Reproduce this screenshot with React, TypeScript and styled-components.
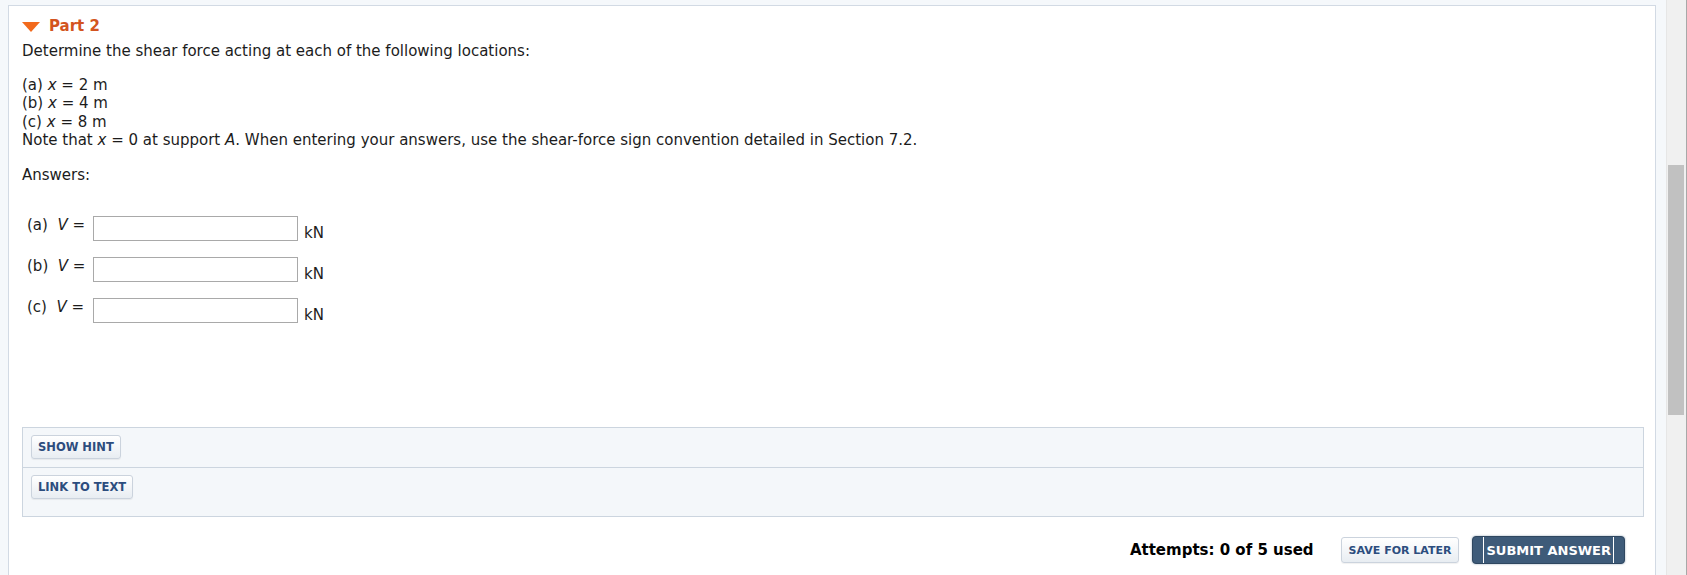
import React from 'react';
import styled, { createGlobalStyle } from 'styled-components';

const GlobalStyle = createGlobalStyle`
  html, body {
    margin: 0;
    padding: 0;
    background: #f5f8fb;
    font-family: 'DejaVu Sans', Verdana, sans-serif;
    font-size: 15px;
    color: #1c1c1c;
  }
`;

/**
 * Page frame: content column plus a fake browser scrollbar
 */
const Page = styled.div`
  display: flex;
  height: 575px;
  overflow: hidden;
`;

const Main = styled.div`
  flex: 1;
  padding: 5px 10px 0 8px;
  display: flex;
`;

const Scrollbar = styled.div`
  width: 21px;
  background: #f0f0f0;
  border-left: 1px solid #e6e6e6;
  border-right: 1px solid #a8a8a8;
  box-sizing: border-box;
  padding: 165px 2px 0 1px;
`;

const Thumb = styled.div`
  height: 250px;
  background: #c1c1c1;
`;

const Panel = styled.section`
  flex: 1;
  background: #fff;
  border: 1px solid #d2dae4;
  border-bottom: none;
  padding: 11px 11px 0 13px;
  display: flex;
  flex-direction: column;
`;

const PartHeader = styled.h2`
  margin: 0;
  display: flex;
  align-items: center;
  gap: 9px;
  font-size: 15px;
  line-height: 18px;
  font-weight: bold;
  color: #d35420;
`;

const Caret = styled.span`
  width: 0;
  height: 0;
  border-left: 9px solid transparent;
  border-right: 9px solid transparent;
  border-top: 10px solid #f26a1d;
  margin-top: 1px;
`;

const Paragraph = styled.p<{ $gap?: number }>`
  margin: ${(p) => p.$gap ?? 0}px 0 0;
  line-height: 18.5px;
`;

const AnswerList = styled.div`
  margin-top: 32px;
  display: flex;
  flex-direction: column;
  gap: 15px;
  padding-left: 5px;
`;

const AnswerRow = styled.div`
  display: flex;
  align-items: flex-start;
  height: 26px;
`;

const AnswerLabel = styled.label`
  width: 66px;
  line-height: 18px;
  white-space: pre;
`;

const AnswerInput = styled.input`
  width: 205px;
  height: 25px;
  box-sizing: border-box;
  border: 1px solid #a9a9a9;
  margin: 0;
  padding: 0 4px;
  font: inherit;
`;

const Unit = styled.span`
  margin: 8px 0 0 6px;
  line-height: 18px;
`;

const Spacer = styled.div`
  flex: 1;
`;

const HintBox = styled.div`
  background: #f4f7fa;
  border: 1px solid #ccd5df;
  display: flex;
  flex-direction: column;
`;

const HintRow = styled.div<{ $tall?: boolean }>`
  padding: 7px 8px ${(p) => (p.$tall ? 17 : 8)}px;
  & + & {
    border-top: 1px solid #ccd5df;
  }
`;

const LightButton = styled.button`
  height: 24px;
  padding: 0 6px;
  border: 1px solid #cbd3dd;
  border-radius: 3px;
  background: linear-gradient(#ffffff, #e8edf2);
  box-shadow: 0 1px 1px rgba(0, 0, 0, 0.06);
  color: #2c4d7e;
  font-family: 'DejaVu Sans', Verdana, sans-serif;
  font-size: 11.5px;
  font-weight: bold;
  text-transform: uppercase;
  cursor: pointer;
`;

const Footer = styled.div`
  display: flex;
  justify-content: flex-end;
  align-items: center;
  gap: 13px;
  padding: 19px 19px 11px 0;
`;

const Attempts = styled.span`
  font-size: 15px;
  font-weight: bold;
  color: #000;
  margin-right: 14px;
`;

const SaveButton = styled(LightButton)`
  height: 26px;
  padding: 0 7px;
  font-size: 11px;
`;

const SubmitButton = styled.button`
  height: 28px;
  padding: 0 10px;
  border: 1px solid #2f4760;
  border-radius: 4px;
  background: #3e5b79;
  box-shadow: 0 0 2px rgba(60, 90, 120, 0.6);
  color: #fff;
  font-family: 'DejaVu Sans', Verdana, sans-serif;
  font-size: 13px;
  font-weight: bold;
  display: flex;
  align-items: stretch;
  cursor: pointer;
`;

const SubmitLabel = styled.span`
  display: flex;
  align-items: center;
  padding: 0 2px;
  border-left: 1px solid #fff;
  border-right: 1px solid #fff;
`;

const answers = ['a', 'b', 'c'];

export default function App() {
  return (
    <>
      <GlobalStyle />
      <Page>
        <Main>
          <Panel>
            <PartHeader>
              <Caret />
              Part 2
            </PartHeader>
            <Paragraph $gap={7}>
              Determine the shear force acting at each of the following locations:
            </Paragraph>
            <Paragraph $gap={15}>
              (a) <i>x</i> = 2 m
              <br />
              (b) <i>x</i> = 4 m
              <br />
              (c) <i>x</i> = 8 m
              <br />
              Note that <i>x</i> = 0 at support <i>A</i>. When entering your answers, use the
              shear-force sign convention detailed in Section 7.2.
            </Paragraph>
            <Paragraph $gap={16}>Answers:</Paragraph>
            <AnswerList>
              {answers.map((a) => (
                <AnswerRow key={a}>
                  <AnswerLabel>
                    ({a}){'  '}<i>V</i> =
                  </AnswerLabel>
                  <AnswerInput type="text" />
                  <Unit>kN</Unit>
                </AnswerRow>
              ))}
            </AnswerList>
            <Spacer />
            <HintBox>
              <HintRow>
                <LightButton>Show Hint</LightButton>
              </HintRow>
              <HintRow $tall>
                <LightButton>Link to Text</LightButton>
              </HintRow>
            </HintBox>
            <Footer>
              <Attempts>Attempts: 0 of 5 used</Attempts>
              <SaveButton>Save for Later</SaveButton>
              <SubmitButton>
                <SubmitLabel>SUBMIT ANSWER</SubmitLabel>
              </SubmitButton>
            </Footer>
          </Panel>
        </Main>
        <Scrollbar>
          <Thumb />
        </Scrollbar>
      </Page>
    </>
  );
}
